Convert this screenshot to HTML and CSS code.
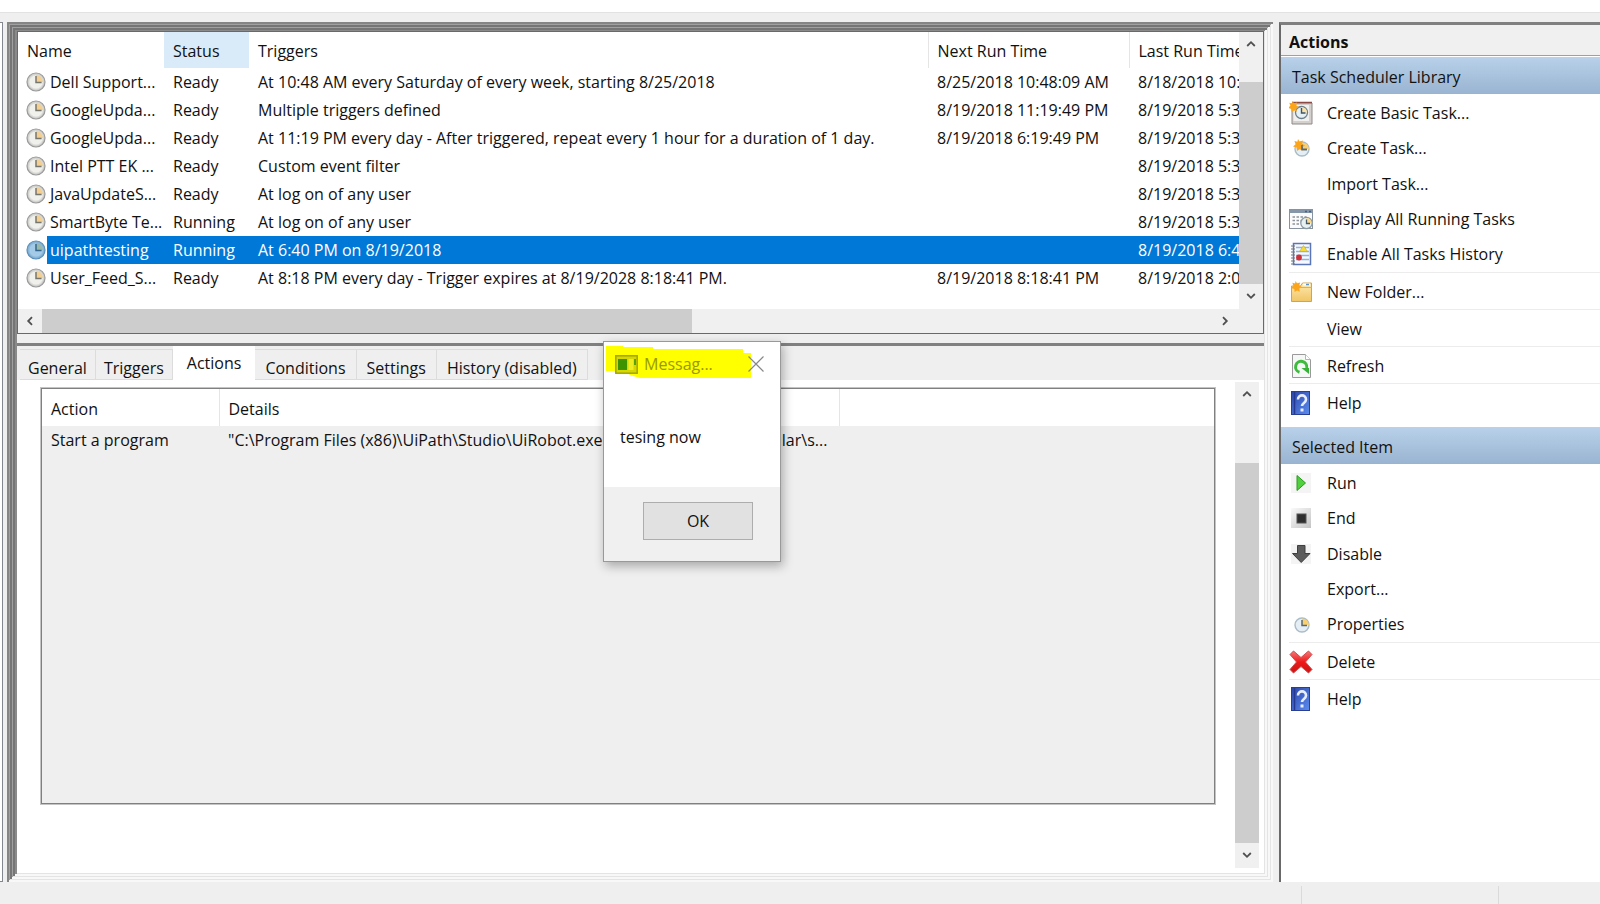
FILE: index.html
```
<!DOCTYPE html>
<html lang="en">
<head>
  <meta charset="UTF-8">
  <title>Task Scheduler</title>
  <link rel="stylesheet" href="styles.css">
</head>
<body>

  <!-- Shared icons -->
  <svg class="sprite" aria-hidden="true">
    <defs>
      <linearGradient id="bookFill" x1="0" x2="1" y1="0" y2="1">
        <stop offset="0" stop-color="#2c46a8"/>
        <stop offset="1" stop-color="#5b8cf0"/>
      </linearGradient>
      <linearGradient id="folderFill" x1="0" x2="0" y1="0" y2="1">
        <stop offset="0" stop-color="#ffe9ae"/>
        <stop offset="1" stop-color="#f0c566"/>
      </linearGradient>
      <linearGradient id="redFill" x1="0" x2="0" y1="0" y2="1">
        <stop offset="0" stop-color="#f27a7a"/>
        <stop offset="0.5" stop-color="#f01818"/>
        <stop offset="1" stop-color="#c81414"/>
      </linearGradient>
      <linearGradient id="endFill" x1="0" x2="1" y1="0" y2="1">
        <stop offset="0" stop-color="#fafafa"/>
        <stop offset="1" stop-color="#c4c4c4"/>
      </linearGradient>
    </defs>
    <symbol id="clock" viewBox="0 0 20 20">
      <circle cx="10" cy="10" r="9" fill="#cfcfcd" stroke="#9a9a9a" stroke-width="1.2"/>
      <circle cx="10" cy="10" r="7" fill="#f0f0ec" stroke="#dededa" stroke-width="0.8"/>
      <path d="M10 10V3a7 7 0 0 1 7 7z" fill="#f3cf90"/>
      <path d="M10 4v6.6h5.6" fill="none" stroke="#77766e" stroke-width="1.5"/>
    </symbol>
    <symbol id="clockBlue" viewBox="0 0 20 20">
      <circle cx="10" cy="10" r="9" fill="#84b0d4" stroke="#5a8fba" stroke-width="1.2"/>
      <circle cx="10" cy="10" r="7" fill="#a3cae6" stroke="#92bcdc" stroke-width="0.8"/>
      <path d="M10 10V3a7 7 0 0 1 7 7z" fill="#98b8a8"/>
      <path d="M10 4v6.6h5.6" fill="none" stroke="#35668e" stroke-width="1.5"/>
    </symbol>
    <symbol id="clockSmall" viewBox="0 0 24 24">
      <circle cx="13" cy="13" r="7" fill="#e4eef4" stroke="#a9bcc8" stroke-width="1.4"/>
      <path d="M13 13V6.500a7 7 0 0 1 7 6.500z" fill="#fbcf6c"/>
      <path d="M13 8v5.500h5" fill="none" stroke="#55697a" stroke-width="1.5"/>
    </symbol>
    <symbol id="star" viewBox="0 0 12 12">
      <path d="M5 0l1.500 2.500L10 1.500 9 5l3 1.500-3 1.800.6 3.400-3-1.400L4 12l-.4-3.400L0 7.500l2.600-2.200L1.400 2l3 .8z" fill="#fba51c"/>
    </symbol>
    <symbol id="help" viewBox="0 0 24 24">
      <rect x="2.500" y="0.500" width="18" height="23" fill="url(#bookFill)" stroke="#2a3f92"/>
      <path d="M5.500 1v22" stroke="#24398f" stroke-width="1.500"/>
      <path d="M9 8.500c0-5.500 8-5.500 8 0 0 3.400-4 3.400-4 6.500" fill="none" stroke="#e9eeff" stroke-width="2.600"/>
      <rect x="11.500" y="17.500" width="3" height="3" fill="#e9eeff"/>
    </symbol>
    <symbol id="chevron" viewBox="0 0 10 10">
      <path d="M1.200 7L5 3.200 8.800 7" fill="none" stroke="#505050" stroke-width="1.800"/>
    </symbol>
  </svg>

  <div class="toolbar"></div>

  <main class="console">
    <div class="tree"></div>

    <div class="center">
      <section class="tasks">
        <div class="tasks-list">
          <div class="table-wrap">
            <table class="task-table">
              <thead>
                <tr>
                  <th class="col-name">Name</th>
                  <th class="col-status sorted">Status</th>
                  <th class="col-triggers">Triggers</th>
                  <th class="col-next">Next Run Time</th>
                  <th class="col-last">Last Run Time</th>
                </tr>
              </thead>
              <tbody>
                <tr><td><svg class="task-icon"><use href="#clock"/></svg><span>Dell Support...</span></td><td>Ready</td><td>At 10:48 AM every Saturday of every week, starting 8/25/2018</td><td>8/25/2018 10:48:09 AM</td><td>8/18/2018 10:48</td></tr>
                <tr><td><svg class="task-icon"><use href="#clock"/></svg><span>GoogleUpda...</span></td><td>Ready</td><td>Multiple triggers defined</td><td>8/19/2018 11:19:49 PM</td><td>8/19/2018 5:32</td></tr>
                <tr><td><svg class="task-icon"><use href="#clock"/></svg><span>GoogleUpda...</span></td><td>Ready</td><td>At 11:19 PM every day - After triggered, repeat every 1 hour for a duration of 1 day.</td><td>8/19/2018 6:19:49 PM</td><td>8/19/2018 5:32</td></tr>
                <tr><td><svg class="task-icon"><use href="#clock"/></svg><span>Intel PTT EK ...</span></td><td>Ready</td><td>Custom event filter</td><td></td><td>8/19/2018 5:32</td></tr>
                <tr><td><svg class="task-icon"><use href="#clock"/></svg><span>JavaUpdateS...</span></td><td>Ready</td><td>At log on of any user</td><td></td><td>8/19/2018 5:34</td></tr>
                <tr><td><svg class="task-icon"><use href="#clock"/></svg><span>SmartByte Te...</span></td><td>Running</td><td>At log on of any user</td><td></td><td>8/19/2018 5:37</td></tr>
                <tr class="selected"><td><svg class="task-icon"><use href="#clockBlue"/></svg><span>uipathtesting</span></td><td>Running</td><td>At 6:40 PM on 8/19/2018</td><td></td><td>8/19/2018 6:49</td></tr>
                <tr><td><svg class="task-icon"><use href="#clock"/></svg><span>User_Feed_S...</span></td><td>Ready</td><td>At 8:18 PM every day - Trigger expires at 8/19/2028 8:18:41 PM.</td><td>8/19/2018 8:18:41 PM</td><td>8/19/2018 2:0</td></tr>
              </tbody>
            </table>
          </div>
          <div class="vscroll">
            <button class="arrow tall" aria-label="Scroll up"><svg><use href="#chevron"/></svg></button>
            <div class="thumb"></div>
            <button class="arrow down" aria-label="Scroll down"><svg><use href="#chevron"/></svg></button>
          </div>
        </div>
        <div class="hscroll">
          <button class="arrow left" aria-label="Scroll left"><svg><use href="#chevron"/></svg></button>
          <div class="track"><div class="thumb"></div></div>
          <button class="arrow right" aria-label="Scroll right"><svg><use href="#chevron"/></svg></button>
        </div>
      </section>

      <section class="details">
        <div class="tabs" role="tablist">
          <button class="tab" role="tab">General</button>
          <button class="tab" role="tab">Triggers</button>
          <button class="tab active" role="tab" aria-selected="true">Actions</button>
          <button class="tab" role="tab">Conditions</button>
          <button class="tab" role="tab">Settings</button>
          <button class="tab" role="tab">History (disabled)</button>
        </div>
        <div class="tab-page">
          <div class="action-list">
            <table class="action-table">
              <thead>
                <tr><th class="col-action">Action</th><th class="col-details">Details</th><th></th></tr>
              </thead>
              <tbody>
                <tr><td>Start a program</td><td>"C:\Program Files (x86)\UiPath\Studio\UiRobot.exe" -file C:\Users\me\Popular\s...</td><td></td></tr>
              </tbody>
            </table>
          </div>
          <div class="vscroll">
            <button class="arrow tallest" aria-label="Scroll up"><svg><use href="#chevron"/></svg></button>
            <div class="thumb"></div>
            <button class="arrow down" aria-label="Scroll down"><svg><use href="#chevron"/></svg></button>
          </div>
        </div>
      </section>
    </div>

    <aside class="actions">
      <h1 class="actions-title">Actions</h1>

      <h2 class="band">Task Scheduler Library</h2>
      <div class="group five">
        <button class="item">
          <svg class="icon" viewBox="0 0 24 24">
            <path d="M3 2h20v21H3z" fill="#d4d0ce" stroke="#8f8a88"/>
            <path d="M3 1.500h20" stroke="#8d4a44" stroke-width="1.500"/>
            <path d="M4.500 4h15.500v16H4.500z" fill="#f1f0ef"/>
            <circle cx="12.500" cy="11.500" r="6" fill="#e6f1f5" stroke="#6d7f88" stroke-width="1.300"/>
            <path d="M12.500 11.500V6a5.500 5.500 0 0 1 5.500 5.500z" fill="#fbe3a8"/>
            <path d="M12.500 7v5h4" fill="none" stroke="#3d5566" stroke-width="1.400"/>
            <use href="#star" x="-1" y="0" width="11" height="11"/>
          </svg>
          Create Basic Task...
        </button>
        <button class="item">
          <svg class="icon" viewBox="0 0 24 24">
            <use href="#clockSmall"/>
            <use href="#star" x="4" y="3" width="12" height="12"/>
            <path d="M13 9v4.500h5" fill="none" stroke="#55697a" stroke-width="1.500"/>
          </svg>
          Create Task...
        </button>
        <button class="item"><span class="icon"></span>Import Task...</button>
        <button class="item">
          <svg class="icon" viewBox="0 0 24 24">
            <rect x="0.500" y="2.500" width="23" height="19" fill="#fbfbfb" stroke="#8793a0"/>
            <path d="M1 4.500h22" stroke="#8596a8" stroke-width="3"/>
            <path d="M16 4.500h2m2 0h2" stroke="#3f5f95" stroke-width="1.500"/>
            <path d="M3.500 10h14M3.500 13.500h10M3.500 17h8" stroke="#8c959c" stroke-width="1.500" stroke-dasharray="2.500 1.500"/>
            <circle cx="17.500" cy="16" r="5.700" fill="#e8f1f2" stroke="#8b9aa2" stroke-width="1.300"/>
            <path d="M17.500 16v-5a5 5 0 0 1 5 5z" fill="#fbd98c"/>
            <path d="M17.500 12.500v4h3.500" fill="none" stroke="#44596a" stroke-width="1.300"/>
          </svg>
          Display All Running Tasks
        </button>
        <button class="item">
          <svg class="icon" viewBox="0 0 24 24">
            <rect x="4.500" y="1.500" width="17" height="21" fill="#f6f9ff" stroke="#5b76b8" stroke-width="1.500"/>
            <path d="M7 5.500h13M7 9.500h13M7 13.500h13M7 17.500h13" stroke="#8fb5d8" stroke-width="1.300"/>
            <path d="M2 4h4M2 7h4M2 10h4M2 13h4M2 16h4M2 19h4M2 22h4" stroke="#777" stroke-width="1.200"/>
            <path d="M14.500 3.500l4 6h-8z" fill="#f4dc3c" stroke="#c9ab1e" stroke-width="0.600"/>
            <circle cx="10" cy="15.500" r="2.900" fill="#d0303a"/>
          </svg>
          Enable All Tasks History
        </button>
      </div>
      <div class="group">
        <button class="item">
          <svg class="icon" viewBox="0 0 24 24">
            <path d="M2.500 21.500V6h9l2-3h9v18.500z" fill="url(#folderFill)" stroke="#cda559"/>
            <path d="M14 4.500h7" stroke="#fff" stroke-width="2"/>
            <path d="M17 4.500h3" stroke="#5b95cc" stroke-width="1.500"/>
            <path d="M12 7.500h10.500" stroke="#d9b162"/>
            <use href="#star" x="2" y="1" width="11" height="11"/>
          </svg>
          New Folder...
        </button>
      </div>
      <div class="group">
        <button class="item"><span class="icon"></span>View</button>
      </div>
      <div class="group">
        <button class="item">
          <svg class="icon" viewBox="0 0 24 24">
            <path d="M3.500 0.500h13l5 5v18h-18z" fill="#f6f7f7" stroke="#9a9a9a"/>
            <path d="M16.500 0.500v5h5" fill="#fff" stroke="#b5b5b5"/>
            <path d="M10.500 18.300a5.600 5.600 0 1 1 7.200-4.300" fill="none" stroke="#3dbb3d" stroke-width="3"/>
            <path d="M12.500 14h7.500v6z" fill="#35b335"/>
          </svg>
          Refresh
        </button>
      </div>
      <div class="group last">
        <button class="item"><svg class="icon"><use href="#help"/></svg>Help</button>
      </div>

      <h2 class="band">Selected Item</h2>
      <div class="group five">
        <button class="item">
          <svg class="icon" viewBox="0 0 24 24">
            <path d="M2 2h20v20H2z" fill="#f4f4f4"/>
            <path d="M8 4.500l8.500 7.500L8 19.500z" fill="#4fd03c" stroke="#2c9a22"/>
          </svg>
          Run
        </button>
        <button class="item">
          <svg class="icon" viewBox="0 0 24 24">
            <path d="M2 2h20v20H2z" fill="url(#endFill)"/>
            <rect x="8" y="8" width="9" height="9" fill="#2e2e2e" stroke="#555"/>
          </svg>
          End
        </button>
        <button class="item">
          <svg class="icon" viewBox="0 0 24 24">
            <path d="M2 2h20v20H2z" fill="#f4f4f4"/>
            <path d="M8.500 3.500h7.500v8h5L12.200 20.500 3.500 11.500h5z" fill="#5d5d5d" stroke="#3f3f3f"/>
          </svg>
          Disable
        </button>
        <button class="item"><span class="icon"></span>Export...</button>
        <button class="item"><svg class="icon"><use href="#clockSmall"/></svg>Properties</button>
      </div>
      <div class="group">
        <button class="item">
          <svg class="icon" viewBox="0 0 24 24">
            <path d="M1 4.500L4.500 1 12 7.500 19.500 1 23 4.500 16.500 12 23 19.500 19.500 23 12 16.500 4.500 23 1 19.500 7.500 12z" fill="url(#redFill)" stroke="#d04a4a" stroke-linejoin="round"/>
          </svg>
          Delete
        </button>
      </div>
      <div class="group last">
        <button class="item"><svg class="icon"><use href="#help"/></svg>Help</button>
      </div>
    </aside>
  </main>

  <footer class="statusbar">
    <span class="status-text"></span>
    <span class="status-cell"></span>
    <span class="status-cell short"></span>
  </footer>

  <!-- Message box -->
  <div class="msgbox" role="dialog" aria-labelledby="msgTitle">
    <div class="msgbox-bar">
      <svg class="marker" viewBox="0 0 146 34" aria-hidden="true">
        <path d="M0 1h17v1h30v2h90v4h8v25H34l-10-3-6-4H0z" fill="#ff0"/>
      </svg>
      <svg class="app-icon" viewBox="0 0 23 19" aria-hidden="true">
        <rect x="0.800" y="0.800" width="21.400" height="17.400" fill="#d6d800" stroke="#a3a600" stroke-width="1.500"/>
        <rect x="3" y="4" width="9" height="11" fill="#3d9400"/>
        <path d="M13.500 4h5v11h-5z" fill="#f0ee20"/>
        <path d="M20 4v6" stroke="#3d9400" stroke-width="1.600"/>
      </svg>
      <span class="msgbox-title" id="msgTitle">Messag...</span>
      <button class="msgbox-close" aria-label="Close">
        <svg viewBox="0 0 16 16"><path d="M0.500 0.500l15 15M15.500 0.500l-15 15" stroke="#888" stroke-width="1.200"/></svg>
      </button>
    </div>
    <p class="msgbox-text">tesing now</p>
    <div class="msgbox-footer">
      <button class="ok">OK</button>
    </div>
  </div>

</body>
</html>
```
FILE: styles.css
```
* {
  box-sizing: border-box;
}

body {
  margin: 0;
  height: 100vh;
  display: flex;
  flex-direction: column;
  background-color: #efefef;
  color: #111;
  font-family: "Open Sans", "Noto Sans", sans-serif;
  font-size: 16px;
  line-height: 28px;
  overflow: hidden;
}

button {
  margin: 0;
  padding: 0;
  border: none;
  background: none;
  color: inherit;
  font: inherit;
}

.sprite {
  position: absolute;
  width: 0;
  height: 0;
}

.toolbar {
  height: 13px;
  flex: none;
  background-color: white;
  border-bottom: 1px solid #e2e2e2;
}

.console {
  flex: 1;
  min-height: 0;
  display: flex;
  padding-top: 9px;
}

.tree {
  width: 3px;
  background-color: white;
  border: 1px solid #828790;
  border-left: none;
  margin-right: 4px;
}

/* Center column, with stacked sunken edges */

.center {
  flex: 1;
  min-width: 0;
  display: flex;
  flex-direction: column;
  padding: 9px 9px 9px 10px;
  box-shadow:
    inset 2px 2px #858585, inset -2px -2px #f8f8f8,
    inset 3px 3px #a0a0a0, inset -3px -3px #e4e4e4,
    inset 5px 5px #757575, inset -5px -5px #f8f8f8,
    inset 6px 6px #a0a0a0, inset -6px -6px #e4e4e4,
    inset 8px 8px #757575, inset -8px -8px #f8f8f8,
    inset 10px 9px #8a8a8a, inset -9px -9px #e4e4e4;
}

.tasks {
  flex: none;
  background-color: white;
  border: 1px solid #696969;
}

.tasks-list {
  display: flex;
  height: 277px;
}

table {
  width: 100%;
  border-collapse: collapse;
  table-layout: fixed;
}

th,
td {
  padding: 0 0 0 9px;
  font-weight: normal;
  text-align: left;
  white-space: nowrap;
  overflow: hidden;
}

th {
  height: 36px;
  padding-top: 2px;
  border-right: 1px solid #e5e5e5;
}

.table-wrap {
  flex: 1;
  min-width: 0;
}

.task-table td {
  height: 28px;
}

.task-table td:first-child {
  display: flex;
  align-items: center;
  padding-left: 8px;
}

.task-table td:first-child span {
  flex: 1;
  padding-left: 3px;
  margin-left: 1px;
}

.col-name {
  width: 146px;
}

.col-status {
  width: 85px;
}

.task-table .col-name,
.task-table .col-status {
  border-right: none;
}

.col-next {
  width: 201px;
}

.task-table .col-triggers {
  width: auto;
}

.task-table .col-last {
  width: 110px;
  border-right: none;
}

.sorted {
  background-color: #d9ebf9;
}

.task-icon {
  width: 20px;
  height: 20px;
  flex: none;
}

.selected {
  color: white;
}

.selected td:not(:first-child),
.selected span {
  background-color: #0078d7;
}

/* Scroll bars */

.vscroll {
  width: 24px;
  flex: none;
  display: flex;
  flex-direction: column;
  background-color: #f0f0f0;
}

.hscroll {
  display: flex;
  height: 24px;
  padding-right: 26px;
  background-color: #f0f0f0;
}

.arrow {
  width: 24px;
  height: 25px;
  flex: none;
  display: flex;
  justify-content: center;
  padding-top: 7px;
}

.arrow svg {
  width: 10px;
  height: 10px;
}

.tall {
  height: 50px;
}

.tallest {
  height: 81px;
}

.down svg {
  transform: rotate(180deg);
}

.left svg {
  transform: rotate(-90deg);
}

.right svg {
  transform: rotate(90deg);
}

.vscroll .thumb {
  flex: 1;
  background-color: #cdcdcd;
}

.track {
  flex: 1;
}

.track .thumb {
  width: 55.5%;
  height: 100%;
  background-color: #cdcdcd;
}

/* Task details */

.details {
  flex: 1;
  min-height: 0;
  margin-top: 9px;
  display: flex;
  flex-direction: column;
  background-color: #efefef;
  border-top: 3px solid #808080;
}

.tabs {
  display: flex;
  align-items: flex-end;
  height: 34px;
  padding-left: 3px;
}

.tab {
  height: 31px;
  padding: 4px 8px 0;
  border: 1px solid #dcdcdc;
  border-left: none;
}

.tab.active {
  height: 34px;
  padding: 0 14px;
  background-color: white;
  border: none;
}

.tab.active ~ .tab {
  padding: 4px 10px 0;
}

.tab-page {
  flex: 1;
  min-height: 0;
  display: flex;
  justify-content: space-between;
  padding: 2px 5px 5px 24px;
  background-color: white;
}

.action-list {
  flex: 1;
  margin: 6px 20px 64px 0;
  background-color: #efefef;
  border: 1px solid #808080;
  box-shadow: 0 0 0 1px #c4c4c4;
}

.action-table th {
  height: 37px;
  background-color: white;
}

.action-table th:last-child {
  border-right: none;
}

.col-action {
  width: 177px;
}

.col-details {
  width: 620px;
}

/* Actions pane */

.actions {
  width: 321px;
  flex: none;
  margin-left: 6px;
  background-color: white;
  border-left: 2px solid #696969;
  border-top: 3px solid #808080;
}

.actions-title {
  margin: 0;
  height: 31px;
  padding-left: 8px;
  background-color: #f0f0f0;
  border-bottom: 1px solid #a0a0a0;
  font-size: 16px;
  line-height: 34px;
}

.band {
  margin: 1px 0 0;
  height: 37px;
  padding-left: 11px;
  background-image: linear-gradient(#b9d1ea, #99b4d1);
  font-size: 16px;
  font-weight: normal;
  line-height: 41px;
}

.group {
  display: flex;
  flex-direction: column;
  height: 37px;
  margin-left: 8px;
  padding-top: 1px;
  border-bottom: 1px solid #ececec;
}

.group.five {
  height: 179px;
}

.group.last {
  border-bottom: none;
  margin-bottom: 6px;
}

.item {
  flex: 1;
  display: flex;
  align-items: center;
  gap: 14px;
  text-align: left;
}

.icon {
  width: 24px;
  height: 24px;
  flex: none;
}

/* Status bar */

.statusbar {
  display: flex;
  height: 22px;
  flex: none;
  padding-top: 4px;
}

.status-text {
  flex: 1;
}

.status-cell {
  width: 197px;
  border-left: 1px solid #dadada;
}

.status-cell.short {
  width: 102px;
}

/* Message box */

.msgbox {
  position: absolute;
  left: 603px;
  top: 341px;
  width: 178px;
  background-color: white;
  border: 1px solid #999;
  box-shadow: 2px 4px 10px rgba(0, 0, 0, 0.3);
}

.msgbox-bar {
  position: relative;
  display: flex;
  align-items: center;
  height: 44px;
  padding: 0 16px 0 11px;
}

.marker {
  position: absolute;
  left: 2px;
  top: 3px;
  width: 146px;
  height: 34px;
}

.app-icon {
  position: relative;
  width: 23px;
  height: 19px;
  flex: none;
}

.msgbox-title {
  position: relative;
  flex: 1;
  padding-left: 6px;
  color: #999900;
}

.msgbox-close {
  position: relative;
  display: flex;
}

.msgbox-close svg {
  width: 16px;
  height: 16px;
}

.msgbox-text {
  margin: 0;
  height: 101px;
  padding: 37px 16px 0;
}

.msgbox-footer {
  height: 74px;
  padding: 15px 27px 0 39px;
  background-color: #f0f0f0;
}

.ok {
  width: 100%;
  height: 38px;
  background-color: #e1e1e1;
  border: 1px solid #adadad;
}
```
